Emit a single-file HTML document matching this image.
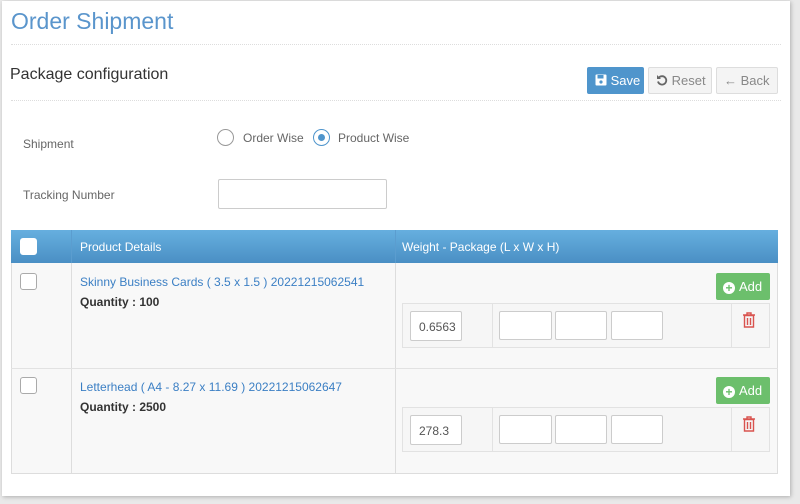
<!DOCTYPE html>
<html><head><style>
*{box-sizing:border-box;margin:0;padding:0}
body{width:800px;height:504px;background:#e9e9e9;font-family:"Liberation Sans",sans-serif;position:relative;overflow:hidden}
.panel{position:absolute;left:2px;top:1px;width:788px;height:495px;background:#fff;box-shadow:1px 1px 4px rgba(0,0,0,.25)}
.a{position:absolute}
.h1{left:9px;top:7px;font-size:23px;color:#5a95cc}
.hr{height:0;border-top:1px dotted #ddd}
.btn{position:absolute;top:66px;height:27px;border:1px solid #ddd;background:#f4f4f4;color:#888;font-size:13px;line-height:25px;padding-left:7px;border-radius:2px}
.lbl{font-size:12px;color:#666}
.radio{position:absolute;width:17px;height:17px;border:1px solid #999;border-radius:50%;background:#fff}
.inp{position:absolute;background:#fff;border:1px solid #ccc;border-radius:2px}
.cb{position:absolute;width:17px;height:17px;border:1px solid #aaa;border-radius:3px;background:#fff}
.link{color:#3b7fc4;font-size:12px}
.qty{color:#333;font-size:12px;font-weight:bold}
.add{position:absolute;width:54px;height:27px;background:#6cbf6c;border-radius:2px;color:#fff;font-size:13px;line-height:27px;padding-left:7px}
.add i{display:inline-block;width:12px;height:12px;border-radius:50%;background:#fff;color:#6cbf6c;font-style:normal;font-weight:bold;font-size:12px;line-height:12px;text-align:center;vertical-align:-1px;margin-right:4px}
</style></head><body>
<div class="panel">
<div class="a h1">Order Shipment</div>
<div class="a hr" style="left:9px;top:43px;width:770px"></div>
<div class="a" style="left:8px;top:65px;font-size:16px;color:#333">Package configuration</div>
<div class="a hr" style="left:9px;top:99px;width:770px"></div>
<div class="btn" style="left:585px;width:57px;background:#4f95cc;border-color:#4f95cc;color:#fff">
<svg width="12" height="12" viewBox="0 0 12 12" style="vertical-align:-1px"><rect x="0.5" y="0.5" width="11" height="11" rx="1" fill="#fff"/><rect x="2.5" y="1" width="6" height="3.5" fill="#4f95cc"/><circle cx="6" cy="8" r="1.6" fill="#4f95cc"/></svg> Save</div>
<div class="btn" style="left:646px;width:64px"><svg width="12" height="12" viewBox="0 0 12 12" style="vertical-align:-1px"><path d="M3 3.5A4.2 4.2 0 1 1 2 7.5" fill="none" stroke="#666" stroke-width="1.8"/><path d="M1 1v4h4z" fill="#666"/></svg> Reset</div>
<div class="btn" style="left:714px;width:62px">&#8592; Back</div>

<div class="a lbl" style="left:21px;top:136px">Shipment</div>
<div class="radio" style="left:215px;top:128px"></div>
<div class="a lbl" style="left:241px;top:130px">Order Wise</div>
<div class="radio" style="left:311px;top:128px;border-color:#4f95cc"><div style="position:absolute;left:4px;top:4px;width:7px;height:7px;border-radius:50%;background:#4f95cc"></div></div>
<div class="a lbl" style="left:336px;top:130px">Product Wise</div>
<div class="a lbl" style="left:21px;top:187px">Tracking Number</div>
<div class="inp" style="left:216px;top:178px;width:169px;height:30px"></div>

<div class="a" style="left:9px;top:229px;width:767px;height:244px;border:1px solid #ddd;background:#f8f8f8"></div>
<div class="a" style="left:9px;top:229px;width:767px;height:33px;background:linear-gradient(#66afdf,#4a8fc4)"></div>
<div class="a" style="left:69px;top:229px;width:1px;height:244px;background:#ddd"></div>
<div class="a" style="left:393px;top:229px;width:1px;height:244px;background:#ddd"></div>
<div class="a" style="left:69px;top:229px;width:1px;height:33px;background:#5b9dcf"></div>
<div class="a" style="left:393px;top:229px;width:1px;height:33px;background:#5b9dcf"></div>
<div class="a" style="left:9px;top:367px;width:767px;height:1px;background:#e2e2e2"></div>
<div class="cb" style="left:18px;top:237px;border-color:#fff"></div>
<div class="a" style="left:78px;top:239px;color:#fff;font-size:12px">Product Details</div>
<div class="a" style="left:400px;top:239px;color:#fff;font-size:12px">Weight - Package (L x W x H)</div>

<div class="cb" style="left:18px;top:272px"></div>
<div class="a link" style="left:78px;top:274px">Skinny Business Cards ( 3.5 x 1.5 ) 20221215062541</div>
<div class="a qty" style="left:78px;top:294px">Quantity : 100</div>
<div class="add" style="left:714px;top:272px"><i>+</i>Add</div>
<div class="a" style="left:400px;top:302px;width:368px;height:45px;border:1px solid #e2e2e2;background:#f6f6f6"></div>
<div class="a" style="left:490px;top:302px;width:1px;height:45px;background:#e2e2e2"></div>
<div class="a" style="left:729px;top:302px;width:1px;height:45px;background:#e2e2e2"></div>
<div class="inp" style="left:408px;top:310px;width:52px;height:30px;font-size:12px;color:#555;padding:8px 0 0 8px">0.6563</div>
<div class="inp" style="left:497px;top:310px;width:53px;height:29px"></div>
<div class="inp" style="left:553px;top:310px;width:52px;height:29px"></div>
<div class="inp" style="left:609px;top:310px;width:52px;height:29px"></div>
<svg class="a" style="left:740px;top:311px" width="14" height="16" viewBox="0 0 14 16"><path d="M1 3h12M5 3V1h4v2M2.5 3.5h9v11.5h-9zM5.5 6v7M8.5 6v7" fill="none" stroke="#d9534f" stroke-width="1.4"/></svg>

<div class="cb" style="left:18px;top:376px"></div>
<div class="a link" style="left:78px;top:379px">Letterhead ( A4 - 8.27 x 11.69 ) 20221215062647</div>
<div class="a qty" style="left:78px;top:399px">Quantity : 2500</div>
<div class="add" style="left:714px;top:376px"><i>+</i>Add</div>
<div class="a" style="left:400px;top:406px;width:368px;height:45px;border:1px solid #e2e2e2;background:#f6f6f6"></div>
<div class="a" style="left:490px;top:406px;width:1px;height:45px;background:#e2e2e2"></div>
<div class="a" style="left:729px;top:406px;width:1px;height:45px;background:#e2e2e2"></div>
<div class="inp" style="left:408px;top:414px;width:52px;height:30px;font-size:12px;color:#555;padding:8px 0 0 8px">278.3</div>
<div class="inp" style="left:497px;top:414px;width:53px;height:29px"></div>
<div class="inp" style="left:553px;top:414px;width:52px;height:29px"></div>
<div class="inp" style="left:609px;top:414px;width:52px;height:29px"></div>
<svg class="a" style="left:740px;top:415px" width="14" height="16" viewBox="0 0 14 16"><path d="M1 3h12M5 3V1h4v2M2.5 3.5h9v11.5h-9zM5.5 6v7M8.5 6v7" fill="none" stroke="#d9534f" stroke-width="1.4"/></svg>
</div>
</body></html>
